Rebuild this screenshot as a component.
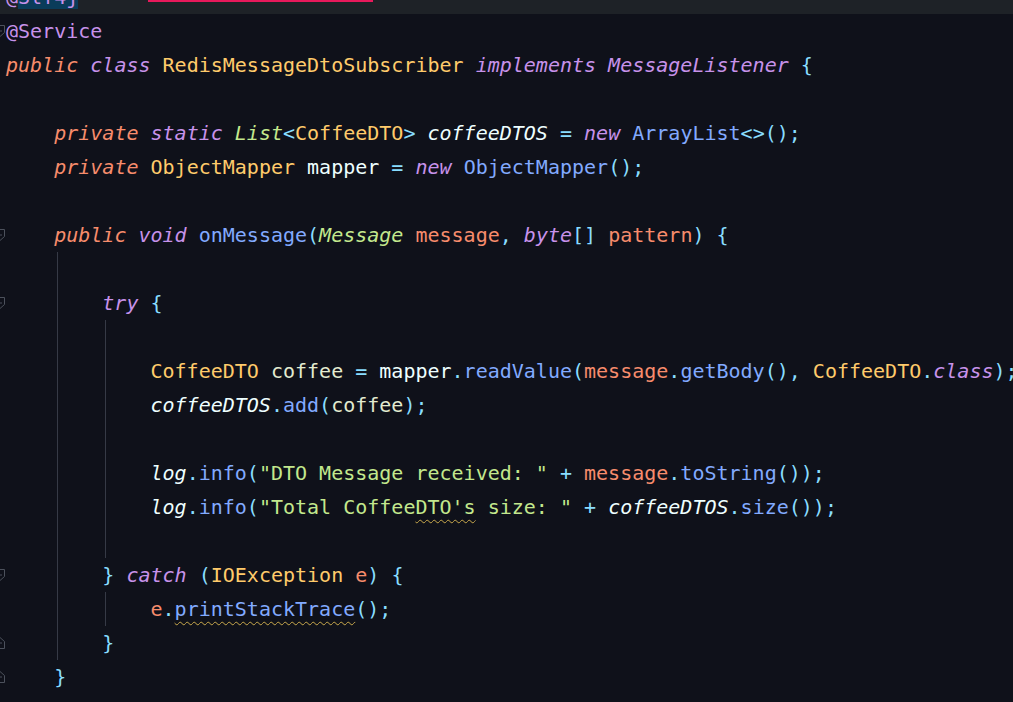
import { FC } from "react";

type Tok = [string, string?];

const P = "text-[#c792ea]";
const PI = "text-[#c792ea] italic";
const OI = "text-[#f78c6c] italic";
const O = "text-[#f78c6c]";
const Y = "text-[#ffcb6b]";
const B = "text-[#82aaff]";
const C = "text-[#89ddff]";
const G = "text-[#c3e88d]";
const GI = "text-[#c3e88d] italic";
const W = "text-[#eeffff]";
const WI = "text-[#eeffff] italic";
const V = "text-[#e3ebd0]";
const SQ = "underline decoration-wavy decoration-[#c9a94c] decoration-1 underline-offset-[5px]";

type Line = {
  toks: Tok[];
  guides?: number[];
  fold?: "open" | "close";
  current?: boolean;
};

const lines: Line[] = [
  { toks: [["@", P], ["Slf4j", P + " bg-[#0a3c5a]"]], current: true },
  { toks: [["@Service", P]], fold: "open" },
  {
    toks: [
      ["public", OI], [" "], ["class", PI], [" "], ["RedisMessageDtoSubscriber", Y], [" "],
      ["implements", PI], [" "], ["MessageListener", PI], [" "], ["{", C],
    ],
  },
  { toks: [] },
  {
    toks: [
      ["    "], ["private", OI], [" "], ["static", PI], [" "], ["List", GI], ["<", C], ["CoffeeDTO", Y],
      [">", C], [" "], ["coffeeDTOS", WI], [" "], ["=", C], [" "], ["new", PI], [" "], ["ArrayList", B],
      ["<>();", C],
    ],
  },
  {
    toks: [
      ["    "], ["private", OI], [" "], ["ObjectMapper", Y], [" "], ["mapper", W], [" "], ["=", C], [" "],
      ["new", PI], [" "], ["ObjectMapper", B], ["();", C],
    ],
  },
  { toks: [] },
  {
    toks: [
      ["    "], ["public", OI], [" "], ["void", PI], [" "], ["onMessage", B], ["(", C], ["Message", GI], [" "],
      ["message", O], [",", C], [" "], ["byte", PI], ["[]", C], [" "], ["pattern", O], [")", C], [" "], ["{", C],
    ],
    fold: "open",
  },
  { toks: [], guides: [57] },
  { toks: [["        "], ["try", PI], [" "], ["{", C]], guides: [57], fold: "open" },
  { toks: [], guides: [57, 105] },
  {
    toks: [
      ["            "], ["CoffeeDTO", Y], [" "], ["coffee", V], [" "], ["=", C], [" "], ["mapper", W], [".", C],
      ["readValue", B], ["(", C], ["message", O], [".", C], ["getBody", B], ["(),", C], [" "], ["CoffeeDTO", Y],
      [".", C], ["class", PI], [");", C],
    ],
    guides: [57, 105],
  },
  {
    toks: [["            "], ["coffeeDTOS", WI], [".", C], ["add", B], ["(", C], ["coffee", V], [");", C]],
    guides: [57, 105],
  },
  { toks: [], guides: [57, 105] },
  {
    toks: [
      ["            "], ["log", WI], [".", C], ["info", B], ["(", C], ['"DTO Message received: "', G], [" "],
      ["+", C], [" "], ["message", O], [".", C], ["toString", B], ["());", C],
    ],
    guides: [57, 105],
  },
  {
    toks: [
      ["            "], ["log", WI], [".", C], ["info", B], ["(", C], ['"Total Coffee', G], ["DTO's", G + " " + SQ],
      [' size: "', G], [" "], ["+", C], [" "], ["coffeeDTOS", WI], [".", C], ["size", B], ["());", C],
    ],
    guides: [57, 105],
  },
  { toks: [], guides: [57, 105] },
  {
    toks: [["        "], ["}", C], [" "], ["catch", PI], [" "], ["(", C], ["IOException", Y], [" "], ["e", O], [")", C], [" "], ["{", C]],
    guides: [57],
    fold: "open",
  },
  {
    toks: [["            "], ["e", O], [".", C], ["printStackTrace", B + " " + SQ], ["();", C]],
    guides: [57, 105],
  },
  { toks: [["        "], ["}", C]], guides: [57], fold: "close" },
  { toks: [["    "], ["}", C]], fold: "close" },
  { toks: [], fold: "open" },
];

const FoldMark: FC<{ kind: "open" | "close" }> = ({ kind }) => (
  <svg
    className="absolute left-[-5px] top-[11px]"
    width="10"
    height="12"
    viewBox="0 0 10 12"
    fill="none"
    stroke="#4c515c"
    strokeWidth="1"
  >
    {kind === "open" ? (
      <path d="M0.5 0.5H9.5V7.5L5 11.5L0.5 7.5Z" />
    ) : (
      <path d="M0.5 11.5H9.5V4.5L5 0.5L0.5 4.5Z" />
    )}
    <path d="M3 6H7" />
  </svg>
);

const CodeLine: FC<{ line: Line }> = ({ line }) => (
  <div
    className={`relative h-[34px] leading-[34px] whitespace-pre pl-[6px] ${
      line.current ? "bg-[#1e2227]" : ""
    }`}
  >
    {line.guides?.map((x) => (
      <span
        key={x}
        className={`absolute top-0 bottom-0 w-px bg-[#363a46] ${x === 57 ? "left-[57px]" : "left-[105px]"}`}
      />
    ))}
    {line.fold && <FoldMark kind={line.fold} />}
    {line.toks.map(([text, cls], i) => (
      <span key={i} className={cls ?? "text-[#eeffff]"}>
        {text}
      </span>
    ))}
  </div>
);

export default function App() {
  return (
    <div className="relative w-[1013px] h-[702px] overflow-hidden bg-[#0f111a] font-['DejaVu_Sans_Mono',monospace] text-[20px]">
      <div className="mt-[-20px]">
        {lines.map((line, i) => (
          <CodeLine key={i} line={line} />
        ))}
      </div>
      <div className="absolute top-0 left-[148px] w-[225px] h-[2px] bg-[#e8195b]" />
    </div>
  );
}
